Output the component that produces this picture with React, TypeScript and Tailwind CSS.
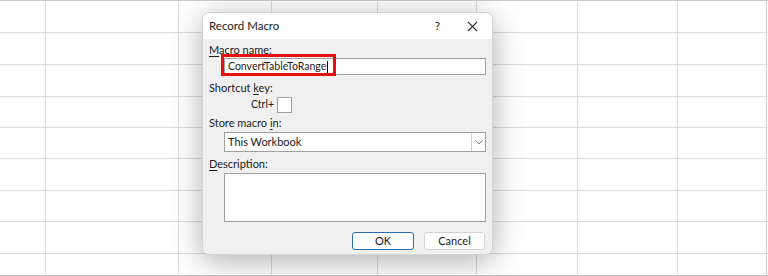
import React from "react";

const ROW_HEIGHTS = [32, 32, 32, 31, 31, 32, 31, 32, 21];
const COL_WIDTHS = [46, 133, 93, 106, 99, 101, 100, 89];

function SheetGrid() {
  return (
    <div className="flex h-[276px] w-[768px] flex-col border-t border-b border-[#c9c9c9] bg-white">
      {ROW_HEIGHTS.map((h, r) => (
        <div
          key={r}
          className={`flex ${r < ROW_HEIGHTS.length - 1 ? "border-b border-[#dcdcdc]" : ""}`}
          style={{ height: h }}
        >
          {COL_WIDTHS.map((w, c) => (
            <div
              key={c}
              className="h-full border-r border-[#dcdcdc] last:border-[#c9c9c9]"
              style={{ width: w }}
            />
          ))}
        </div>
      ))}
    </div>
  );
}

function Mn({ children }: { children: React.ReactNode }) {
  return <span className="underline underline-offset-[2px]">{children}</span>;
}

function RecordMacroDialog() {
  return (
    <div className="absolute left-[202px] top-[12px] flex h-[243px] w-[291px] flex-col overflow-hidden rounded-[7px] border border-[#d4d4d4] bg-[#f0f0f0] text-[11px] text-[#1b1b1b] shadow-[0_6px_30px_rgba(0,0,0,0.32)]">
      {/* title bar */}
      <div className="flex h-[26px] shrink-0 items-center bg-white pl-[6px] pr-[14px] text-[11.5px]">
        <span className="flex-1">Record Macro</span>
        <span className="mr-[27px] text-[12px]">?</span>
        <svg width="11" height="11" viewBox="0 0 11 11" className="text-[#333]">
          <path d="M1 1 L10 10 M10 1 L1 10" stroke="currentColor" strokeWidth="1.1" />
        </svg>
      </div>

      <div className="flex flex-1 flex-col px-[6px] pt-[4px]">
        <div className="h-[14px] leading-[14px]">
          <Mn>M</Mn>acro name:
        </div>
        <div className="relative ml-[15px] mt-px">
          <div className="flex h-[17px] items-center border border-[#a0a0a0] bg-white pl-[3px] text-[10.5px]">
            ConvertTableToRange<span className="ml-px inline-block h-[12px] w-px bg-black" />
          </div>
          <div className="pointer-events-none absolute left-[-3px] top-[-4px] h-[22px] w-[115px] border-[3px] border-[#e8100f]" />
        </div>

        <div className="mt-[6px] h-[14px] leading-[14px]">
          Shortcut <Mn>k</Mn>ey:
        </div>
        <div className="mt-[2px] flex items-center pl-[42px]">
          <span className="mr-[3px] text-[10.5px]">Ctrl+</span>
          <div className="h-[16px] w-[15px] border border-[#a0a0a0] bg-white" />
        </div>

        <div className="mt-[3px] h-[14px] leading-[14px]">
          Store macro <Mn>i</Mn>n:
        </div>
        <div className="ml-[15px] mt-[2px] flex h-[20px] border border-[#a0a0a0] bg-white">
          <div className="flex flex-1 items-center pl-[3px] text-[11px]">This Workbook</div>
          <div className="flex w-[14px] items-center justify-center border-l border-[#d0d0d0]">
            <svg width="8" height="5" viewBox="0 0 8 5">
              <path d="M0.5 0.5 L4 4 L7.5 0.5" fill="none" stroke="#707070" strokeWidth="0.9" />
            </svg>
          </div>
        </div>

        <div className="mt-[5px] h-[14px] leading-[14px]">
          <Mn>D</Mn>escription:
        </div>
        <div className="ml-[15px] mt-[2px] h-[49px] border border-[#a0a0a0] bg-white" />

        <div className="mt-[10px] flex justify-end gap-[10px] pr-px">
          <button className="flex h-[18px] w-[62px] items-center justify-center rounded-[3px] border border-[#2a6fb6] bg-white text-[11px]">
            OK
          </button>
          <button className="flex h-[18px] w-[61px] items-center justify-center rounded-[3px] border border-[#d2d2d2] bg-white text-[11px]">
            Cancel
          </button>
        </div>
      </div>
    </div>
  );
}

export default function App() {
  return (
    <div className="relative h-[276px] w-[768px] overflow-hidden bg-white font-['Lato',sans-serif]">
      <SheetGrid />
      <RecordMacroDialog />
    </div>
  );
}
